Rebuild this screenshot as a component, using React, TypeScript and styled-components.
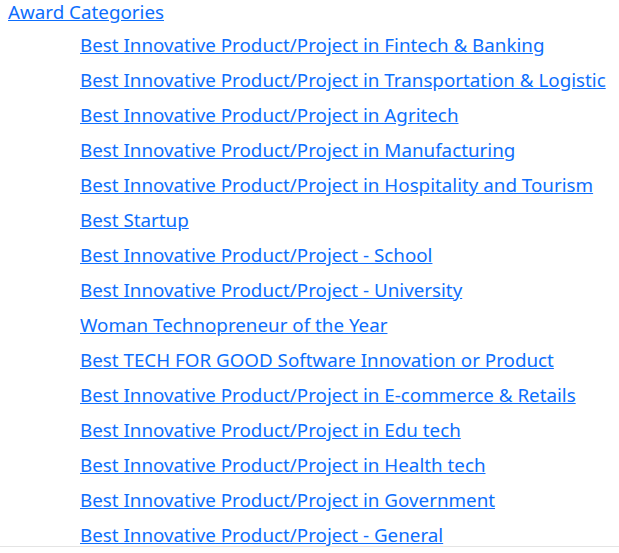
import React from 'react';
import styled, { createGlobalStyle } from 'styled-components';

const GlobalStyle = createGlobalStyle`
  html, body {
    margin: 0;
    padding: 0;
    background: #ffffff;
  }
  body {
    font-family: "Noto Sans", "Open Sans", sans-serif;
  }
`;

const Page = styled.div`
  width: 619px;
  height: 547px;
  overflow: hidden;
  border-bottom: 1px solid #e4e4e4;
  padding: 0 8px;
  box-sizing: border-box;
`;

const Heading = styled.a`
  display: inline-block;
  font-size: 18.8px;
  line-height: 24px;
  color: #0d6efd;
  text-decoration: underline;
`;

const List = styled.ul`
  list-style: none;
  margin: 9px 0 0;
  padding: 0 0 0 72px;
  display: flex;
  flex-direction: column;
  gap: 11px;
`;

const Item = styled.li`
  height: 24px;
  font-size: 18.8px;
  line-height: 24px;
`;

const ItemLink = styled.a`
  color: #0d6efd;
  text-decoration: underline;
  white-space: nowrap;
`;

const categories = [
  'Best Innovative Product/Project in Fintech & Banking',
  'Best Innovative Product/Project in Transportation & Logistic',
  'Best Innovative Product/Project in Agritech',
  'Best Innovative Product/Project in Manufacturing',
  'Best Innovative Product/Project in Hospitality and Tourism',
  'Best Startup',
  'Best Innovative Product/Project - School',
  'Best Innovative Product/Project - University',
  'Woman Technopreneur of the Year',
  'Best TECH FOR GOOD Software Innovation or Product',
  'Best Innovative Product/Project in E-commerce & Retails',
  'Best Innovative Product/Project in Edu tech',
  'Best Innovative Product/Project in Health tech',
  'Best Innovative Product/Project in Government',
  'Best Innovative Product/Project - General',
];

export default function App() {
  return (
    <>
      <GlobalStyle />
      <Page>
        <Heading href="#">Award Categories</Heading>
        <List>
          {categories.map((c) => (
            <Item key={c}>
              <ItemLink href="#">{c}</ItemLink>
            </Item>
          ))}
        </List>
      </Page>
    </>
  );
}
